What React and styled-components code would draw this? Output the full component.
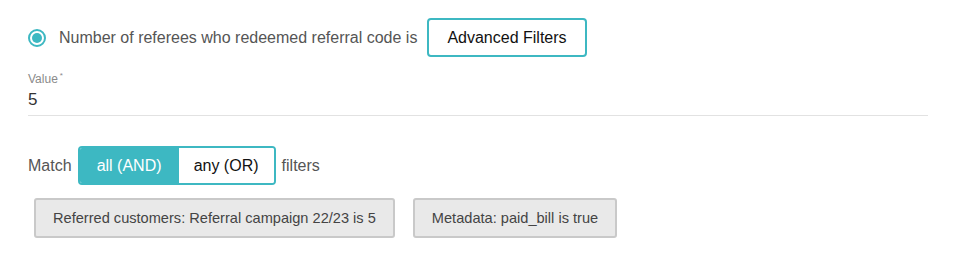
import React, { useState } from "react";
import styled, { createGlobalStyle } from "styled-components";

const teal = "#3db8c2";

const GlobalStyle = createGlobalStyle`
  body {
    margin: 0;
    background: #fff;
    font-family: "Liberation Sans", Arial, Helvetica, sans-serif;
  }
`;

const Page = styled.div`
  padding: 18px 29px 0 28px;
  display: flex;
  flex-direction: column;
`;

const RadioRow = styled.label`
  display: flex;
  align-items: center;
  height: 39px;
  cursor: pointer;
`;

const Radio = styled.span`
  width: 18px;
  height: 18px;
  box-sizing: border-box;
  border-radius: 50%;
  border: 2px solid ${teal};
  display: flex;
  align-items: center;
  justify-content: center;
  margin-right: 13px;

  &::after {
    content: "";
    width: 10px;
    height: 10px;
    border-radius: 50%;
    background: ${teal};
  }
`;

const RadioText = styled.span`
  font-size: 16px;
  color: #555;
`;

const OutlineButton = styled.button`
  margin-left: 10px;
  height: 39px;
  padding: 0 18px;
  border: 2px solid ${teal};
  border-radius: 4px;
  background: #fff;
  color: #111;
  font-family: inherit;
  font-size: 16px;
  cursor: pointer;
`;

const Field = styled.div`
  margin-top: 12px;
  display: flex;
  flex-direction: column;
  border-bottom: 1px solid #e2e2e2;
  padding-bottom: 5px;
`;

const FieldLabel = styled.span`
  font-size: 12px;
  color: #8a8a8a;
  line-height: 14px;

  sup {
    font-size: 8px;
    margin-left: 2px;
  }
`;

const FieldValue = styled.span`
  margin-top: 4px;
  font-size: 17px;
  color: #333;
  line-height: 20px;
`;

const MatchRow = styled.div`
  margin-top: 30px;
  display: flex;
  align-items: center;
  gap: 6px;
  font-size: 16px;
  color: #555;
`;

const Segmented = styled.div`
  display: flex;
  height: 39px;
  box-sizing: border-box;
  border: 2px solid ${teal};
  border-radius: 4px;
  overflow: hidden;
`;

const Segment = styled.button`
  width: ${(p) => p.$w}px;
  border: none;
  background: ${(p) => (p.$active ? teal : "#fff")};
  color: ${(p) => (p.$active ? "#fff" : "#111")};
  font-family: inherit;
  font-size: 16px;
  cursor: pointer;
`;

const Chips = styled.div`
  margin-top: 13px;
  margin-left: 6px;
  display: flex;
  gap: 18px;
`;

const Chip = styled.div`
  height: 40px;
  box-sizing: border-box;
  padding: 0 17px;
  display: flex;
  align-items: center;
  background: #e9e9e9;
  border: 2px solid #c9c9c9;
  border-radius: 3px;
  font-size: 14.6px;
  color: #444;
`;

export default function App() {
  const [mode, setMode] = useState("all");
  return (
    <>
      <GlobalStyle />
      <Page>
        <RadioRow>
          <Radio />
          <RadioText>Number of referees who redeemed referral code is</RadioText>
          <OutlineButton>Advanced Filters</OutlineButton>
        </RadioRow>
        <Field>
          <FieldLabel>
            Value<sup>*</sup>
          </FieldLabel>
          <FieldValue>5</FieldValue>
        </Field>
        <MatchRow>
          <span>Match</span>
          <Segmented>
            <Segment $w={99} $active={mode === "all"} onClick={() => setMode("all")}>
              all (AND)
            </Segment>
            <Segment $w={95} $active={mode === "any"} onClick={() => setMode("any")}>
              any (OR)
            </Segment>
          </Segmented>
          <span>filters</span>
        </MatchRow>
        <Chips>
          <Chip>Referred customers: Referral campaign 22/23 is 5</Chip>
          <Chip>Metadata: paid_bill is true</Chip>
        </Chips>
      </Page>
    </>
  );
}
